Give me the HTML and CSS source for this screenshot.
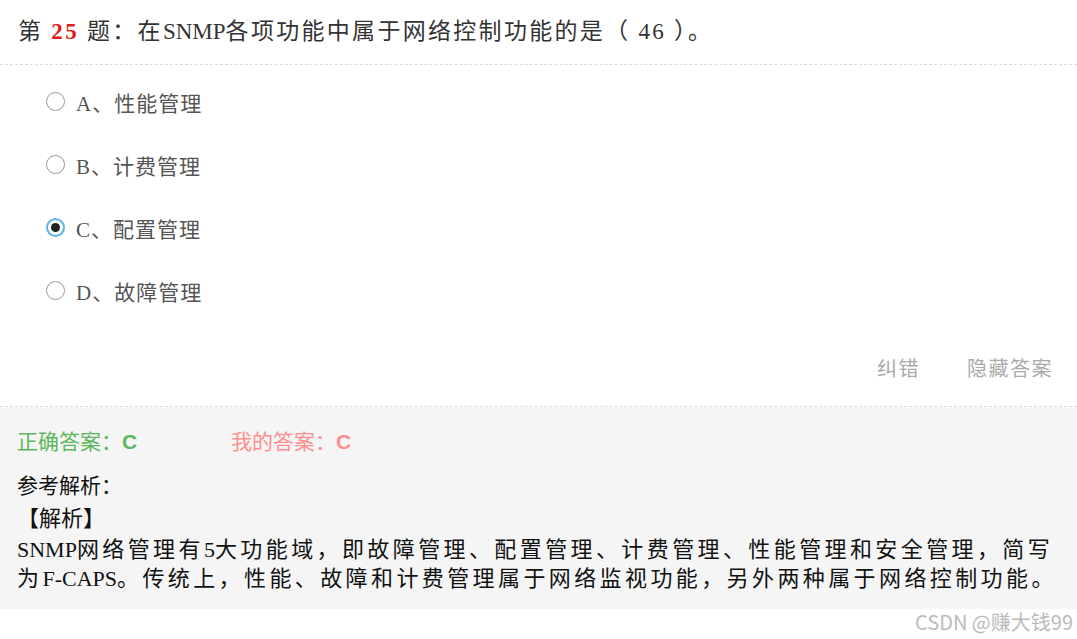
FILE: index.html
```html
<!DOCTYPE html>
<html lang="zh-CN">
<head>
<meta charset="utf-8">
<title>第25题</title>
<link rel="stylesheet" href="styles.css">
</head>
<body>
<div class="page">
  <div class="question">第 <b class="num">25</b> 题：在<span class="latin">SNMP</span>各项功能中属于网络控制功能的是（ 46 ）。</div>
  <ul class="options">
    <li class="option"><span class="radio"></span><span class="label">A、性能管理</span></li>
    <li class="option"><span class="radio"></span><span class="label">B、计费管理</span></li>
    <li class="option"><span class="radio checked"></span><span class="label">C、配置管理</span></li>
    <li class="option"><span class="radio"></span><span class="label">D、故障管理</span></li>
  </ul>
  <div class="actions">
    <span class="action">纠错</span>
    <span class="action">隐藏答案</span>
  </div>
  <div class="answer">
    <div class="answer-row">
      <span class="correct">正确答案：<b class="letter">C</b></span>
      <span class="mine">我的答案：<b class="letter">C</b></span>
    </div>
    <div class="analysis-title">参考解析：</div>
    <div class="analysis">
      <div class="bracket">【解析】</div>
      <div class="analysis-body"><span class="latin">SNMP</span>网络管理有<span class="latin">5</span>大功能域，即故障管理、配置管理、计费管理、性能管理和安全管理，简写为<span class="latin">F-CAPS</span>。传统上，性能、故障和计费管理属于网络监视功能，另外两种属于网络控制功能。</div>
    </div>
  </div>
  <div class="footer">CSDN @赚大钱99</div>
</div>
</body>
</html>
```

FILE: styles.css
```css
html, body {
  margin: 0;
  padding: 0;
  background: #fff;
}
body {
  font-family: "Liberation Serif", "Noto Sans CJK SC", serif;
  width: 1077px;
  height: 639px;
  overflow: hidden;
}
.page {
  display: flex;
  flex-direction: column;
}
.latin {
  letter-spacing: 0;
}
.question {
  height: 65px;
  box-sizing: border-box;
  padding: 16px 0 0 18px;
  font-size: 23px;
  line-height: 32px;
  color: #333;
  letter-spacing: 2.3px;
  border-bottom: 1px dashed #ddd;
}
.question .num {
  color: #e21a1a;
  font-weight: bold;
}
.options {
  list-style: none;
  margin: 0;
  padding: 5px 0 0 46px;
}
.option {
  height: 63px;
  display: flex;
  align-items: center;
  gap: 11px;
}
.radio {
  width: 19px;
  height: 19px;
  border: 1.5px solid #999;
  border-radius: 50%;
  background: #fff;
  box-sizing: border-box;
  display: flex;
  align-items: center;
  justify-content: center;
}
.radio.checked {
  border: 2px solid #5cb6e6;
}
.radio.checked::after {
  content: "";
  width: 9px;
  height: 9px;
  border-radius: 50%;
  background: #222;
}
.label {
  font-size: 21px;
  color: #555;
  letter-spacing: 1px;
}
.actions {
  height: 85px;
  box-sizing: border-box;
  display: flex;
  justify-content: flex-end;
  align-items: center;
  gap: 47px;
  padding: 7px 24px 0 0;
  border-bottom: 1px dashed #ddd;
}
.action {
  font-family: "Noto Sans CJK SC", sans-serif;
  font-size: 20px;
  color: #aaa;
  letter-spacing: 1.5px;
}
.answer {
  background: #f5f5f5;
  height: 202px;
  box-sizing: border-box;
  padding: 20px 0 0 17px;
}
.answer-row {
  display: flex;
  font-size: 21px;
  line-height: 30px;
}
.letter {
  font-family: "Liberation Sans", sans-serif;
  font-weight: bold;
}
.correct {
  color: #5cb85c;
  width: 214px;
}
.mine {
  color: #ff8f8f;
}
.analysis-title {
  margin-top: 14px;
  font-size: 21px;
  line-height: 30px;
  color: #111;
}
.analysis {
  font-size: 22px;
  line-height: 29px;
  color: #111;
}
.bracket {
  margin-top: 3px;
}
.analysis-body {
  margin-top: 2px;
  width: 1050px;
  letter-spacing: 3.4px;
}
.footer {
  height: 29px;
  text-align: right;
  padding-right: 4px;
  font-family: "Noto Sans CJK SC", sans-serif;
  font-size: 20px;
  line-height: 26px;
  color: #bbb;
}
```
